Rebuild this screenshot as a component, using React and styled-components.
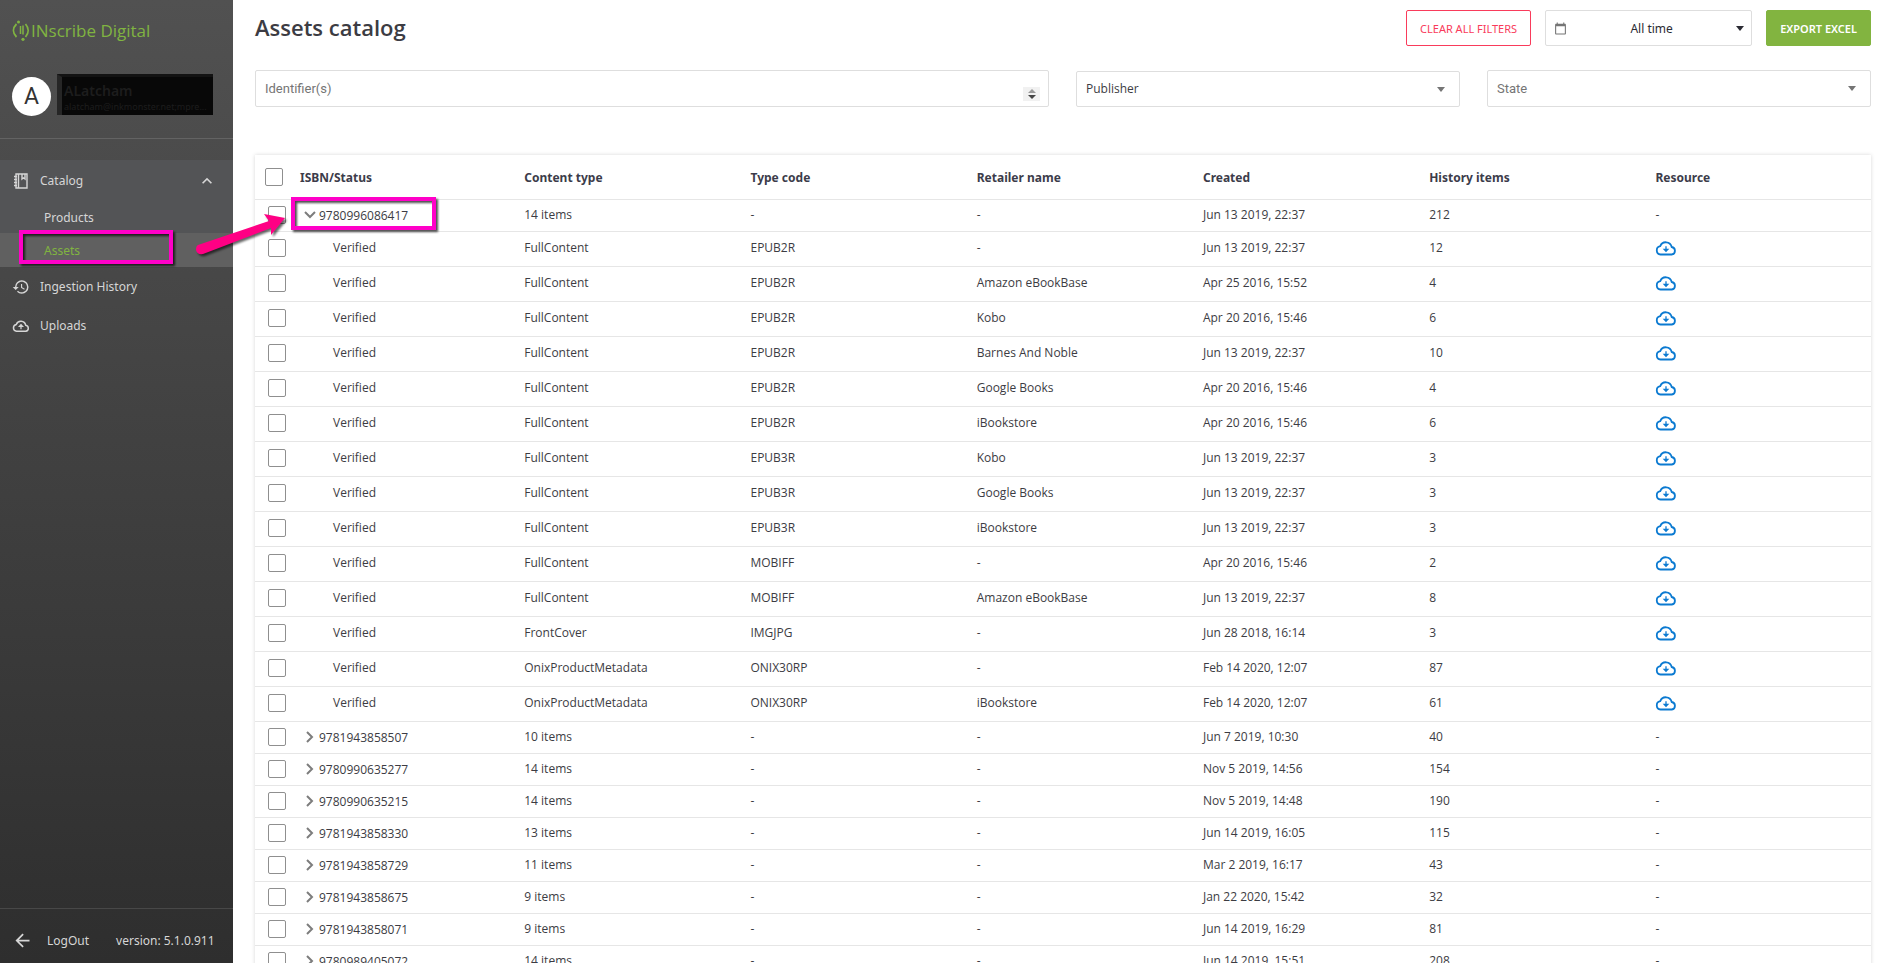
import { useState } from 'react';
import styled, { createGlobalStyle, css } from 'styled-components';
import { MdArrowBack, MdCalendarToday, MdHistory, MdKeyboardArrowUp } from 'react-icons/md';

const GlobalStyle = createGlobalStyle`
  * {
    box-sizing: border-box;
  }

  body {
    margin: 0;
    background: #fff;
    color: #3c3c43;
    font-family: 'Noto Sans', 'Open Sans', sans-serif;
    font-size: 12px;
    overflow: hidden;
  }

  button, input, select, textarea {
    font-family: inherit;
  }
`;

const Page = styled.div`
  display: flex;
  height: 100vh;
  overflow: hidden;
`;

/* ---------- sidebar ---------- */

const Sidebar = styled.aside`
  display: flex;
  flex-direction: column;
  flex: 0 0 233px;
  min-width: 0;
  background: linear-gradient(#515151, #2e2e2e);
  color: #d6d6d6;
`;

const LogoLink = styled.a`
  display: flex;
  align-items: center;
  gap: 1px;
  padding: 18px 12px 0;
  height: 43px;
  color: #80b441;
  font-family: 'Open Sans', sans-serif;
  font-size: 17px;
  line-height: 24px;
  text-decoration: none;
  white-space: nowrap;
`;

const User = styled.div`
  display: flex;
  align-items: center;
  gap: 6px;
  height: 96px;
  padding: 11px 20px 0 12px;
  border-bottom: 1px solid #636363;
`;

const Avatar = styled.div`
  flex: none;
  width: 39px;
  height: 39px;
  border-radius: 50%;
  background: #fff;
  color: #333;
  font-family: Roboto, sans-serif;
  font-size: 23px;
  line-height: 39px;
  text-align: center;
`;

const UserInfo = styled.div`
  flex: 1;
  min-width: 0;
  height: 41px;
  margin-bottom: 4px;
  padding: 7px 2px 0;
  border-left: 5px solid #262626;
  border-top: 3px solid #131313;
  background: #080808;
  color: #1d1d1d;
`;

const UserName = styled.div`
  font-size: 14px;
  font-weight: 600;
  line-height: 14px;
`;

const UserMail = styled.div`
  overflow: hidden;
  font-size: 9px;
  line-height: 18px;
  white-space: nowrap;
`;

const Nav = styled.nav`
  flex: 1;
  padding-top: 21px;
`;

const NavGroup = styled.div`
  background: #535456;
`;

const navItem = css`
  display: flex;
  align-items: center;
  width: 100%;
  padding: 0 16px 0 12px;
  border: 0;
  background: none;
  color: inherit;
  font-size: 12px;
  text-decoration: none;

  & > svg:first-child {
    flex: none;
    width: 18px;
    height: 18px;
    margin-right: 10px;
  }
`;

const NavToggle = styled.button`
  ${navItem}
  height: 41px;

  & > svg:last-child {
    margin-left: auto;
  }
`;

const NavLink = styled.a`
  ${navItem}
  height: 39px;
`;

const SubLink = styled.a`
  display: flex;
  align-items: center;
  height: ${(props) => (props.$active ? '34px' : '32px')};
  padding-left: 44px;
  background: ${(props) => (props.$active ? '#606060' : 'none')};
  color: ${(props) => (props.$active ? '#80b441' : '#d6d6d6')};
  font-size: 12px;
  text-decoration: none;
`;

const SidebarFooter = styled.footer`
  display: flex;
  align-items: center;
  gap: 27px;
  height: 55px;
  padding: 9px 12px 0;
  border-top: 1px solid #484848;
  white-space: nowrap;
`;

const LogOut = styled.button`
  display: flex;
  align-items: center;
  gap: 14px;
  padding: 0;
  border: 0;
  background: none;
  color: inherit;
  font-size: 12px;
`;

/* ---------- main ---------- */

const Main = styled.main`
  flex: 1;
  min-width: 0;
  padding: 10px 16px 0 22px;
`;

const Header = styled.header`
  display: flex;
  align-items: flex-start;
  justify-content: space-between;
  height: 60px;
`;

const Title = styled.h1`
  margin: 0;
  font-family: 'Open Sans', sans-serif;
  font-size: 22px;
  font-weight: 600;
  line-height: 34px;
`;

const Actions = styled.div`
  display: flex;
  gap: 14px;
`;

const Button = styled.button`
  height: 36px;
  padding: 0 13px;
  border: 1px solid ${(props) => (props.$primary ? '#82b440' : '#f93b5b')};
  border-radius: 2px;
  background: ${(props) => (props.$primary ? '#82b440' : '#fff')};
  color: ${(props) => (props.$primary ? '#fff' : '#f93b5b')};
  font-size: 11px;
  font-weight: ${(props) => (props.$primary ? 600 : 400)};
`;

const field = css`
  border: 1px solid #dedede;
  border-radius: 2px;
  background: #fff;
`;

const DateRange = styled.button`
  ${field}
  display: flex;
  align-items: center;
  justify-content: space-between;
  width: 207px;
  height: 36px;
  padding: 0 7px 0 8px;
  color: #2b2b33;
  font-size: 12px;
`;

const Caret = styled.span`
  border: 4px solid transparent;
  border-top: 5px solid ${(props) => props.$color};
  border-bottom: 0;
`;

const Filters = styled.div`
  display: grid;
  grid-template-columns: 794fr 384fr 384fr;
  align-items: end;
  gap: 27px;
`;

const Field = styled.div`
  ${field}
  display: flex;
  align-items: center;
  height: ${(props) => (props.$short ? '36px' : '37px')};
  padding: 0 14px 0 9px;
`;

const Identifiers = styled.input`
  flex: 1;
  padding: 0;
  border: 0;
  outline: 0;
  font-family: Roboto, sans-serif;
  font-size: 13px;

  &::placeholder {
    color: #757575;
  }
`;

const Stepper = styled.span`
  display: flex;
  flex-direction: column;
  align-items: center;
  justify-content: center;
  gap: 2px;
  align-self: flex-end;
  width: 17px;
  height: 14px;
  margin: 0 -6px 5px 0;
  background: #f1f1f1;
`;

const Up = styled.span`
  border: 4px solid transparent;
  border-bottom: 4px solid #999;
  border-top: 0;
`;

const Down = styled.span`
  border: 4px solid transparent;
  border-top: 4px solid #444;
  border-bottom: 0;
`;

const Select = styled.select`
  flex: 1;
  padding: 0 0 1px;
  border: 0;
  outline: 0;
  appearance: none;
  background: none;
  color: ${(props) => (props.$muted ? '#757575' : '#3c3c43')};
  font-family: ${(props) => (props.$muted ? 'Roboto' : "'Open Sans'")}, sans-serif;
  font-size: ${(props) => (props.$muted ? '13px' : '12px')};
`;

const TableCard = styled.div`
  margin-top: 48px;
  box-shadow: 0 0 4px rgba(0, 0, 0, 0.16);
`;

const Table = styled.table`
  width: 100%;
  border-collapse: collapse;
  table-layout: fixed;
`;

const CheckCol = styled.col`
  width: 43px;
`;

const Col = styled.col`
  width: ${(props) => (props.$last ? 'auto' : '14%')};
`;

const Row = styled.tr`
  height: ${(props) => (props.$child ? '35px' : '32px')};
  border-bottom: 1px solid #e6e6e6;

  & > td {
    padding-bottom: ${(props) => (props.$child ? '1px' : '0')};
  }
`;

const HeadRow = styled.tr`
  height: 44px;
  border-bottom: 1px solid #e6e6e6;
`;

const Th = styled.th`
  padding: 2px 0 0;
  color: #3c3c4a;
  font-size: 12px;
  font-weight: 700;
  text-align: left;

  &:nth-child(2) {
    padding-left: 2px;
  }
`;

const Td = styled.td`
  padding: 0;
  font-family: 'Open Sans', sans-serif;
  font-size: 12px;
  line-height: 18px;

  &:nth-child(2) {
    padding-left: ${(props) => (props.$indent ? '35px' : '1px')};
  }
`;

const CheckCell = styled.td`
  padding: 0 0 0 ${(props) => (props.$head ? '10px' : '13px')};
`;

const Checkbox = styled.input`
  display: block;
  width: 18px;
  height: 18px;
  margin: 0;
  border: 1px solid #8f8f8f;
  border-radius: 2px;
  appearance: none;
  background: #fff;

  &:checked {
    background: #82b440;
  }
`;

const Expander = styled.button`
  position: relative;
  display: flex;
  align-items: center;
  gap: 3px;
  height: 18px;
  padding: 0 0 0 5px;
  border: 0;
  background: none;
  color: inherit;
  font-size: 12px;
`;

const Download = styled.a`
  display: block;
  height: 18px;
  color: #0b7ad1;
`;

/* ---------- tutorial markers ---------- */

const Highlight = styled.span`
  position: absolute;
  inset: ${(props) => props.$inset};
  border: 4px solid #ff00c8;
  filter: drop-shadow(2px 2px 1px rgba(0, 0, 0, 0.7));
  pointer-events: none;
`;

const SubItem = styled.div`
  position: relative;
`;

const Arrow = styled.svg`
  position: absolute;
  left: 194px;
  top: -22px;
  z-index: 1;
  filter: drop-shadow(2px 2px 1px rgba(0, 0, 0, 0.6));
  pointer-events: none;
`;

const LogoMark = () => (
  <svg width="18" height="21" viewBox="0 0 18 21" fill="none" stroke="currentColor" strokeWidth="1.8">
    <path d="M4.500 4C.5 8 .5 13 4.500 17M13.500 4c3.500 4 3.500 9 0 13" />
    <path d="M8.500 6v8M11 5.500v9" strokeWidth="1.500" />
    <circle cx="6.500" cy="2" r="1.500" fill="currentColor" stroke="none" />
    <circle cx="11" cy="19.300" r="1.600" fill="currentColor" stroke="none" />
  </svg>
);

const NotebookIcon = () => (
  <svg viewBox="0 0 18 18" fill="none" stroke="currentColor" strokeWidth="1.4">
    <path d="M4 2h11v14H4zM6.500 2v14M10 2v5l1.500-1.200L13 7V2" />
    <path d="M2 4.500h3M2 7.500h3M2 10.500h3M2 13.500h3" />
  </svg>
);

const CloudIcon = ({ up }) => (
  <svg width="22" height="18" viewBox="0 0 22 18" fill="none" stroke="currentColor" strokeWidth="1.800">
    <path d="M5.500 15.500a4.200 4.200 0 0 1-.3-8.300A6 6 0 0 1 16.700 8a3.800 3.800 0 0 1 .1 7.500z" />
    {up ? (
      <path d="M11 13V9M9 9.500h4L11 7.300z" fill="currentColor" strokeWidth="1.500" />
    ) : (
      <path d="M11 7.300V11M9.200 10.300h3.600L11 12.200z" fill="currentColor" strokeWidth="1.300" />
    )}
  </svg>
);

const Chevron = ({ open }) => (
  <svg width="12" height="12" viewBox="0 0 12 12" fill="none" stroke="#7d7d7d" strokeWidth="2">
    <path d={open ? 'M1 3l5 5 5-5' : 'M3 1l5 5-5 5'} />
  </svg>
);

const assets = [
  ['FullContent', 'EPUB2R', '-', 'Jun 13 2019, 22:37', 12],
  ['FullContent', 'EPUB2R', 'Amazon eBookBase', 'Apr 25 2016, 15:52', 4],
  ['FullContent', 'EPUB2R', 'Kobo', 'Apr 20 2016, 15:46', 6],
  ['FullContent', 'EPUB2R', 'Barnes And Noble', 'Jun 13 2019, 22:37', 10],
  ['FullContent', 'EPUB2R', 'Google Books', 'Apr 20 2016, 15:46', 4],
  ['FullContent', 'EPUB2R', 'iBookstore', 'Apr 20 2016, 15:46', 6],
  ['FullContent', 'EPUB3R', 'Kobo', 'Jun 13 2019, 22:37', 3],
  ['FullContent', 'EPUB3R', 'Google Books', 'Jun 13 2019, 22:37', 3],
  ['FullContent', 'EPUB3R', 'iBookstore', 'Jun 13 2019, 22:37', 3],
  ['FullContent', 'MOBIFF', '-', 'Apr 20 2016, 15:46', 2],
  ['FullContent', 'MOBIFF', 'Amazon eBookBase', 'Jun 13 2019, 22:37', 8],
  ['FrontCover', 'IMGJPG', '-', 'Jun 28 2018, 16:14', 3],
  ['OnixProductMetadata', 'ONIX30RP', '-', 'Feb 14 2020, 12:07', 87],
  ['OnixProductMetadata', 'ONIX30RP', 'iBookstore', 'Feb 14 2020, 12:07', 61],
];

const products = [
  { isbn: '9780996086417', items: 14, created: 'Jun 13 2019, 22:37', history: 212, assets },
  { isbn: '9781943858507', items: 10, created: 'Jun 7 2019, 10:30', history: 40 },
  { isbn: '9780990635277', items: 14, created: 'Nov 5 2019, 14:56', history: 154 },
  { isbn: '9780990635215', items: 14, created: 'Nov 5 2019, 14:48', history: 190 },
  { isbn: '9781943858330', items: 13, created: 'Jun 14 2019, 16:05', history: 115 },
  { isbn: '9781943858729', items: 11, created: 'Mar 2 2019, 16:17', history: 43 },
  { isbn: '9781943858675', items: 9, created: 'Jan 22 2020, 15:42', history: 32 },
  { isbn: '9781943858071', items: 9, created: 'Jun 14 2019, 16:29', history: 81 },
  { isbn: '9780989405072', items: 14, created: 'Jun 14 2019, 15:51', history: 208 },
];

const columns = [
  'ISBN/Status',
  'Content type',
  'Type code',
  'Retailer name',
  'Created',
  'History items',
  'Resource',
];

const ProductRows = ({ product, open, onToggle }) => (
  <>
    <Row>
      <CheckCell>
        <Checkbox type="checkbox" aria-label={`Select ${product.isbn}`} />
      </CheckCell>
      <Td>
        <Expander type="button" aria-expanded={open} onClick={onToggle}>
          <Chevron open={open} />
          {product.isbn}
          {product.assets && <Highlight $inset="-9px -28px -6px -8px" />}
        </Expander>
      </Td>
      <Td>{product.items} items</Td>
      <Td>-</Td>
      <Td>-</Td>
      <Td>{product.created}</Td>
      <Td>{product.history}</Td>
      <Td>-</Td>
    </Row>
    {open &&
      product.assets?.map(([content, code, retailer, created, history], i) => (
        <Row $child key={i}>
          <CheckCell>
            <Checkbox type="checkbox" aria-label={`Select asset ${i + 1}`} />
          </CheckCell>
          <Td $indent>Verified</Td>
          <Td>{content}</Td>
          <Td>{code}</Td>
          <Td>{retailer}</Td>
          <Td>{created}</Td>
          <Td>{history}</Td>
          <Td>
            <Download href="#download" aria-label="Download">
              <CloudIcon />
            </Download>
          </Td>
        </Row>
      ))}
  </>
);

const App = () => {
  const [openIsbn, setOpenIsbn] = useState('9780996086417');

  return (
    <Page>
      <GlobalStyle />
      <Sidebar>
        <LogoLink href="#home">
          <LogoMark />
          INscribe Digital
        </LogoLink>
        <User>
          <Avatar>A</Avatar>
          <UserInfo>
            <UserName>ALatcham</UserName>
            <UserMail>alatcham@inkmonster.net;mpre...</UserMail>
          </UserInfo>
        </User>
        <Nav>
          <NavGroup>
            <NavToggle type="button" aria-expanded="true">
              <NotebookIcon />
              Catalog
              <MdKeyboardArrowUp size={20} />
            </NavToggle>
            <SubLink href="#products">Products</SubLink>
            <SubItem>
              <SubLink href="#assets" $active>
                Assets
              </SubLink>
              <Highlight $inset="-3px 60px 3px 19px" />
              <Arrow width="94" height="48" viewBox="0 0 94 48">
                <path
                  d="M4 34 L75 10 L70 3 L91 7 L77 24 L77 17 L9 43 Q3 44 2 39 Q2 35 4 34Z"
                  fill="#ff0084"
                />
              </Arrow>
            </SubItem>
          </NavGroup>
          <NavLink href="#history">
            <MdHistory />
            Ingestion History
          </NavLink>
          <NavLink href="#uploads">
            <CloudIcon up />
            Uploads
          </NavLink>
        </Nav>
        <SidebarFooter>
          <LogOut type="button">
            <MdArrowBack size={21} />
            LogOut
          </LogOut>
          <span>version: 5.1.0.911</span>
        </SidebarFooter>
      </Sidebar>

      <Main>
        <Header>
          <Title>Assets catalog</Title>
          <Actions>
            <Button type="button">CLEAR ALL FILTERS</Button>
            <DateRange type="button">
              <MdCalendarToday size={13} color="#757575" />
              All time
              <Caret $color="#2b2b33" />
            </DateRange>
            <Button type="button" $primary>
              EXPORT EXCEL
            </Button>
          </Actions>
        </Header>
        <Filters>
          <Field>
            <Identifiers placeholder="Identifier(s)" aria-label="Identifier(s)" />
            <Stepper>
              <Up />
              <Down />
            </Stepper>
          </Field>
          <Field $short>
            <Select aria-label="Publisher">
              <option>Publisher</option>
            </Select>
            <Caret $color="#757575" />
          </Field>
          <Field>
            <Select $muted aria-label="State">
              <option>State</option>
            </Select>
            <Caret $color="#757575" />
          </Field>
        </Filters>
        <TableCard>
          <Table>
            <colgroup>
              <CheckCol />
              {columns.map((name) => (
                <Col key={name} $last={name === 'Resource'} />
              ))}
            </colgroup>
            <thead>
              <HeadRow>
                <CheckCell $head>
                  <Checkbox type="checkbox" aria-label="Select all" />
                </CheckCell>
                {columns.map((name) => (
                  <Th key={name}>{name}</Th>
                ))}
              </HeadRow>
            </thead>
            <tbody>
              {products.map((product) => (
                <ProductRows
                  key={product.isbn}
                  product={product}
                  open={product.isbn === openIsbn}
                  onToggle={() => setOpenIsbn(product.isbn === openIsbn ? '' : product.isbn)}
                />
              ))}
            </tbody>
          </Table>
        </TableCard>
      </Main>
    </Page>
  );
};

export default App;
